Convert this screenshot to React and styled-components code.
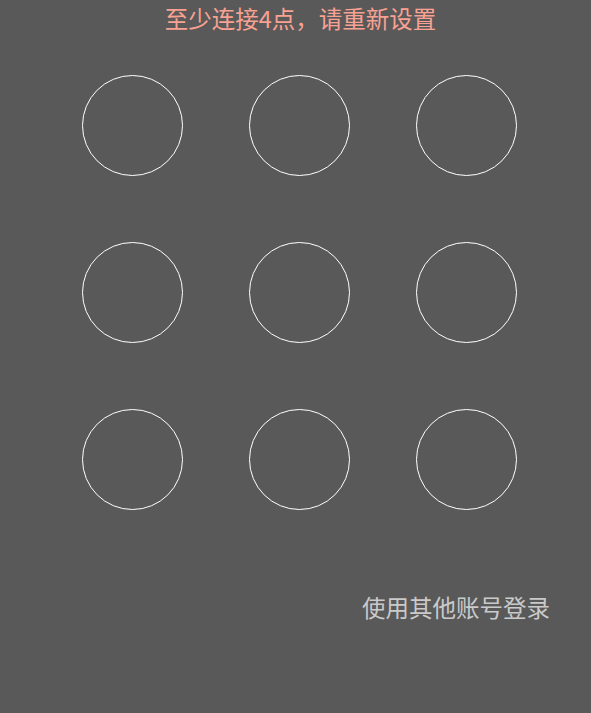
import React from "react";
import styled, { createGlobalStyle } from "styled-components";

const Global = createGlobalStyle`
  html, body { margin: 0; padding: 0; background: #595959; }
  body { font-family: "Noto Sans CJK SC", "Noto Sans", sans-serif; }
`;

const Page = styled.div`
  width: 591px;
  height: 713px;
  background: #595959;
  display: flex;
  flex-direction: column;
  overflow: hidden;
`;

const Title = styled.div`
  color: #f9a193;
  font-size: 23.5px;
  line-height: 36px;
  height: 36px;
  text-align: center;
  padding-left: 10px;
`;

const Grid = styled.div`
  margin-top: 39px;
  margin-left: 82px;
  display: grid;
  grid-template-columns: repeat(3, 101px);
  grid-auto-rows: 101px;
  column-gap: 66px;
  row-gap: 66px;
`;

const Dot = styled.div`
  box-sizing: border-box;
  width: 101px;
  height: 101px;
  border-radius: 50%;
  border: 1.3px solid #ffffff;
`;

const Footer = styled.div`
  margin-top: 82px;
  align-self: flex-end;
  margin-right: 41px;
  color: #cacaca;
  font-size: 23.5px;
  line-height: 30px;
`;

export default function App() {
  return (
    <>
      <Global />
      <Page>
        <Title>至少连接4点，请重新设置</Title>
        <Grid>
          {Array.from({ length: 9 }).map((_, i) => (
            <Dot key={i} />
          ))}
        </Grid>
        <Footer>使用其他账号登录</Footer>
      </Page>
    </>
  );
}
